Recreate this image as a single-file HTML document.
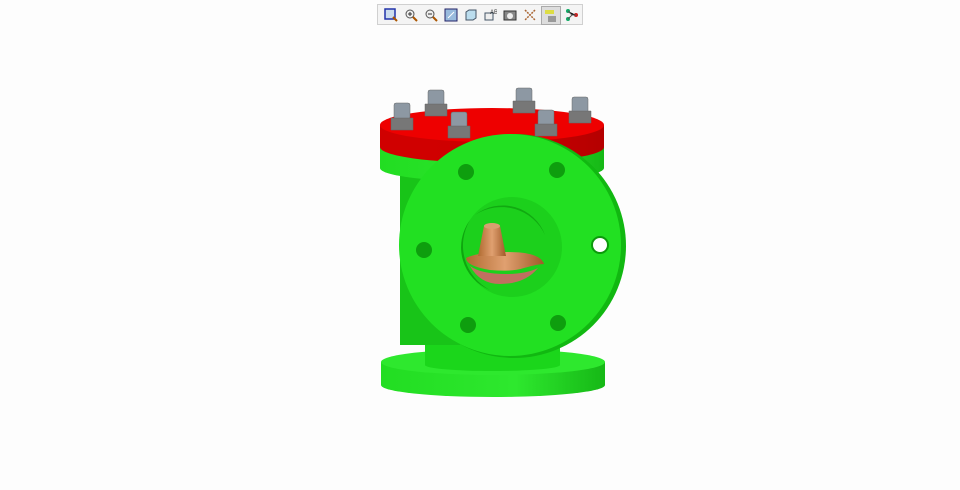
<!DOCTYPE html><html><head><style>body{margin:0;background:#fdfdfd;width:960px;height:490px;overflow:hidden;font-family:"Liberation Sans",sans-serif}
.tb{position:absolute;left:377px;top:4px;width:206px;height:21px;border:1px solid #d0d0d0;background:#f4f4f4;display:flex;padding-left:3px;box-sizing:border-box}
.tb div{width:18px;height:17px;margin:1px 1px;display:flex;align-items:center;justify-content:center}
</style></head><body>
<div class="tb">
<div><svg width="14" height="14"><rect x="1" y="1" width="10" height="10" fill="#cde" stroke="#23a" stroke-width="1.5"/><line x1="9" y1="9" x2="13" y2="13" stroke="#a50" stroke-width="2"/></svg></div>
<div><svg width="14" height="14"><circle cx="6" cy="6" r="4" fill="#eee" stroke="#555"/><path d="M4 6h4M6 4v4" stroke="#333"/><line x1="9" y1="9" x2="13" y2="13" stroke="#a50" stroke-width="2"/></svg></div>
<div><svg width="14" height="14"><circle cx="6" cy="6" r="4" fill="#eee" stroke="#555"/><path d="M4 6h4" stroke="#333"/><line x1="9" y1="9" x2="13" y2="13" stroke="#a50" stroke-width="2"/></svg></div>
<div><svg width="14" height="14"><rect x="1" y="1" width="12" height="12" fill="#9bd" stroke="#226"/><path d="M4 10l6-6" stroke="#fff"/></svg></div>
<div><svg width="14" height="14"><path d="M2 4l3-2h7v8l-3 2H2z" fill="#bde" stroke="#456"/></svg></div>
<div><svg width="14" height="14"><rect x="2" y="5" width="8" height="7" fill="#eee" stroke="#456"/><text x="7" y="6" font-size="6" fill="#333">AB</text></svg></div>
<div><svg width="14" height="14"><rect x="1" y="3" width="12" height="9" fill="#888" stroke="#333"/><circle cx="7" cy="8" r="3" fill="#eee"/></svg></div>
<div><svg width="14" height="14"><path d="M2 2l10 10M12 2L2 12" stroke="#a63" stroke-width="1.5" stroke-dasharray="2 1"/></svg></div>
<div style="background:#ddd;border:1px solid #aaa"><svg width="14" height="14"><rect x="1" y="1" width="9" height="4" fill="#dd4"/><path d="M4 7h8v6H4z" fill="#999"/></svg></div>
<div><svg width="14" height="14"><circle cx="3" cy="3" r="2" fill="#1a6"/><circle cx="3" cy="11" r="2" fill="#1a6"/><circle cx="11" cy="7" r="2" fill="#c22"/><path d="M3 3l4 4h4M3 11l4-4" stroke="#555"/></svg></div>
</div>
<svg width="960" height="490" style="position:absolute;left:0;top:0">
<defs><linearGradient id="rg"><stop offset="0" stop-color="#d00" stop-opacity="0"/><stop offset="1" stop-color="#900" stop-opacity=".5"/></linearGradient>
<linearGradient id="br" x1="0" x2="1"><stop offset="0" stop-color="#b06a30"/><stop offset=".5" stop-color="#e0a070"/><stop offset="1" stop-color="#a05a28"/></linearGradient>
<linearGradient id="gs" x1="0" x2="1"><stop offset="0" stop-color="#22dd22"/><stop offset=".6" stop-color="#2ee82e"/><stop offset="1" stop-color="#16b816"/></linearGradient></defs>
<!-- bottom flange -->
<path d="M381 362v23a112 12 0 0 0 224 0v-23z" fill="url(#gs)"/>
<ellipse cx="493" cy="362" rx="112" ry="13" fill="#2ee82e"/>
<path d="M425 330h135v35a67 6 0 0 1 -135 0z" fill="#1bd61b"/>
<!-- body -->
<rect x="400" y="170" width="60" height="175" fill="#18c418"/>
<!-- top flange -->
<path d="M380 140v28a112 14 0 0 0 224 0v-28z" fill="url(#gs)"/>
<path d="M380 125v22a112 16 0 0 0 224 0v-22z" fill="#d00000"/>
<path d="M380 125v22a112 16 0 0 0 224 0v-22z" fill="url(#rg)"/>
<ellipse cx="492" cy="125" rx="112" ry="17" fill="#ee0000"/>
<!-- main flange -->
<ellipse cx="514" cy="246" rx="112" ry="112" fill="#11b811"/>
<ellipse cx="510" cy="245" rx="111" ry="111" fill="#22e022"/>
<ellipse cx="512" cy="247" rx="50" ry="50" fill="#1cd01c"/>
<path d="M470 220a46 46 0 0 0 20 70a50 50 0 0 1 -20 -70z" fill="#0fa60f"/>
<path d="M475 215a45 45 0 0 1 70 20a48 48 0 0 0 -70 -20z" fill="#11aa11"/>
<!-- brass -->
<path d="M470 266q10 18 30 18q25 0 38 -16q-12 6 -32 6q-25 0 -36 -8z" fill="#c07060"/>
<path d="M466 258q0 8 24 12q22 2 34 -2q14 -4 20 -4q-4 -12 -36 -12q-30 0 -42 6z" fill="url(#br)"/>
<path d="M478 256l6 -30q8 -6 16 0l6 30z" fill="url(#br)"/>
<ellipse cx="492" cy="226" rx="8" ry="3" fill="#d8a070"/>
<!-- holes -->
<g fill="#0e9e0e"><circle cx="466" cy="172" r="8"/><circle cx="557" cy="170" r="8"/><circle cx="424" cy="250" r="8"/><circle cx="468" cy="325" r="8"/><circle cx="558" cy="323" r="8"/></g>
<circle cx="600" cy="245" r="8" fill="#fff" stroke="#0c9a0c" stroke-width="2"/>
<!-- bolts -->
<g fill="#8d98a3" stroke="#666" stroke-width=".5">
<rect x="394" y="103" width="16" height="16" rx="2"/><path d="M391 118h22v12h-22z" fill="#777"/>
<rect x="428" y="90" width="16" height="16" rx="2"/><path d="M425 104h22v12h-22z" fill="#777"/>
<rect x="451" y="112" width="16" height="16" rx="2"/><path d="M448 126h22v12h-22z" fill="#777"/>
<rect x="516" y="88" width="16" height="16" rx="2"/><path d="M513 101h22v12h-22z" fill="#777"/>
<rect x="538" y="110" width="16" height="16" rx="2"/><path d="M535 124h22v12h-22z" fill="#777"/>
<rect x="572" y="97" width="16" height="16" rx="2"/><path d="M569 111h22v12h-22z" fill="#777"/>
</g>
</svg>
</body></html>
